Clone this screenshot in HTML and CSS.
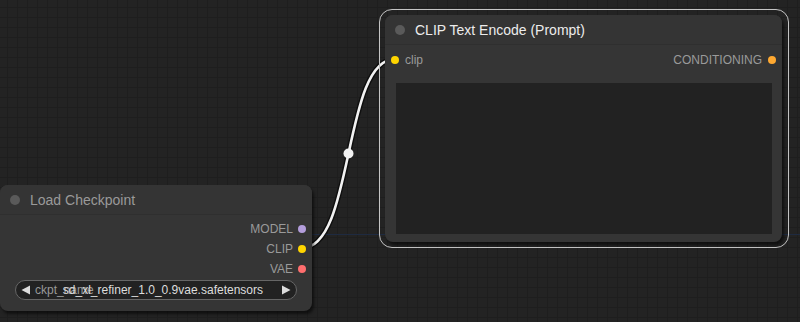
FILE: index.html
```html
<!DOCTYPE html>
<html>
<head>
<meta charset="utf-8">
<link rel="stylesheet" href="styles.css">
</head>
<body>
<div class="canvas">
  <svg class="links" width="800" height="322" viewBox="0 0 800 322">
    <line x1="0" y1="234.5" x2="800" y2="234.5" class="guide"/>
    <path d="M302,248 C354.7,248 342.3,59 395,59" class="link-border"/>
    <path d="M302,248 C354.7,248 342.3,59 395,59" class="link"/>
    <circle cx="348.5" cy="153.5" r="5" class="link-mid"/>
  </svg>

  <div class="node ckpt">
    <div class="title">
      <span class="title-dot"></span>
      <span class="title-text">Load Checkpoint</span>
    </div>
    <div class="body">
      <div class="slot out"><span class="label">MODEL</span><span class="dot model"></span></div>
      <div class="slot out"><span class="label">CLIP</span><span class="dot clip"></span></div>
      <div class="slot out"><span class="label">VAE</span><span class="dot vae"></span></div>
      <div class="combo">
        <svg class="arrow" width="10" height="10" viewBox="0 0 10 10"><polygon points="9,0.5 9,9.5 0.5,5"/></svg>
        <span class="combo-label">ckpt_name</span>
        <span class="combo-value">sd_xl_refiner_1.0_0.9vae.safetensors</span>
        <svg class="arrow" width="10" height="10" viewBox="0 0 10 10"><polygon points="1,0.5 1,9.5 9.5,5"/></svg>
      </div>
    </div>
  </div>

  <div class="selection"></div>
  <div class="node clipenc">
    <div class="title">
      <span class="title-dot"></span>
      <span class="title-text selected">CLIP Text Encode (Prompt)</span>
    </div>
    <div class="body">
      <div class="slot io">
        <span class="dot clip"></span><span class="label">clip</span>
        <span class="spacer"></span>
        <span class="label">CONDITIONING</span><span class="dot cond"></span>
      </div>
      <div class="textarea"></div>
    </div>
  </div>
</div>
</body>
</html>
```
FILE: styles.css
```css
html, body {
  margin: 0;
  padding: 0;
}
body {
  width: 800px;
  height: 322px;
  overflow: hidden;
  background-color: #222222;
  font-family: "Liberation Sans", Arial, sans-serif;
}
.canvas {
  position: relative;
  width: 800px;
  height: 322px;
  background-color: #232323;
  background-image:
    linear-gradient(to right, #1e1e1e 1px, transparent 1px),
    linear-gradient(to bottom, #1e1e1e 1px, transparent 1px);
  background-size: 10px 10px;
  background-position: 7px 7px;
}
.links {
  position: absolute;
  left: 0;
  top: 0;
}
.guide {
  stroke: #1e2a40;
  stroke-width: 1;
}
.link-border {
  fill: none;
  stroke: rgba(0, 0, 0, 0.55);
  stroke-width: 5.5;
}
.link {
  fill: none;
  stroke: #f2f2f2;
  stroke-width: 2.6;
}
.link-mid {
  fill: #f2f2f2;
}
.node {
  position: absolute;
  background: #353535;
  border-radius: 8px;
  box-shadow: 2px 3px 3px rgba(0, 0, 0, 0.55);
  display: flex;
  flex-direction: column;
}
.ckpt {
  left: 0;
  top: 185px;
  width: 312px;
  height: 126px;
}
.clipenc {
  left: 385px;
  top: 15px;
  width: 397px;
  height: 227px;
}
.selection {
  position: absolute;
  left: 379px;
  top: 9px;
  width: 408px;
  height: 237px;
  border: 1px solid #c4c4c4;
  border-radius: 13px;
}
.title {
  height: 29px;
  border-bottom: 1px solid #2f2f2f;
  background: #343434;
  border-radius: 8px 8px 0 0;
  display: flex;
  align-items: center;
  padding-left: 10px;
}
.title-dot {
  width: 10px;
  height: 10px;
  border-radius: 50%;
  background: #5a5a5a;
  margin-right: 10px;
}
.title-text {
  font-size: 14px;
  color: #9a9a9a;
}
.title-text.selected {
  color: #ececec;
}
.body {
  flex: 1;
  display: flex;
  flex-direction: column;
}
.ckpt .body {
  padding-top: 4px;
}
.slot {
  height: 20px;
  display: flex;
  align-items: center;
  font-size: 12px;
  color: #9a9a9a;
}
.slot.out {
  justify-content: flex-end;
  padding-right: 6px;
  gap: 5px;
}
.slot.io {
  margin-top: 5px;
  padding: 0 6px;
  gap: 6px;
}
.spacer {
  flex: 1;
}
.dot {
  width: 8px;
  height: 8px;
  border-radius: 50%;
  flex: none;
}
.dot.model { background: #b39ddb; }
.dot.clip { background: #ffd500; }
.dot.vae { background: #ff6e6e; }
.dot.cond { background: #ffa931; }
.combo {
  margin: 1px 15px 0 15px;
  height: 18px;
  border: 1px solid #666;
  border-radius: 10px;
  background: #222;
  display: grid;
  grid-template-columns: 10px 1fr 10px;
  align-items: center;
  padding: 0 5px;
  font-size: 12px;
}
.arrow {
  fill: #dddddd;
}
.combo-label {
  grid-column: 2;
  grid-row: 1;
  justify-self: start;
  margin-left: 4px;
  color: #999;
  white-space: nowrap;
}
.combo-value {
  grid-column: 2;
  grid-row: 1;
  justify-self: end;
  margin-right: 18px;
  color: #dddddd;
  white-space: nowrap;
}
.textarea {
  margin: 13px 10px 8px 11px;
  flex: 1;
  background: #222222;
}
```
